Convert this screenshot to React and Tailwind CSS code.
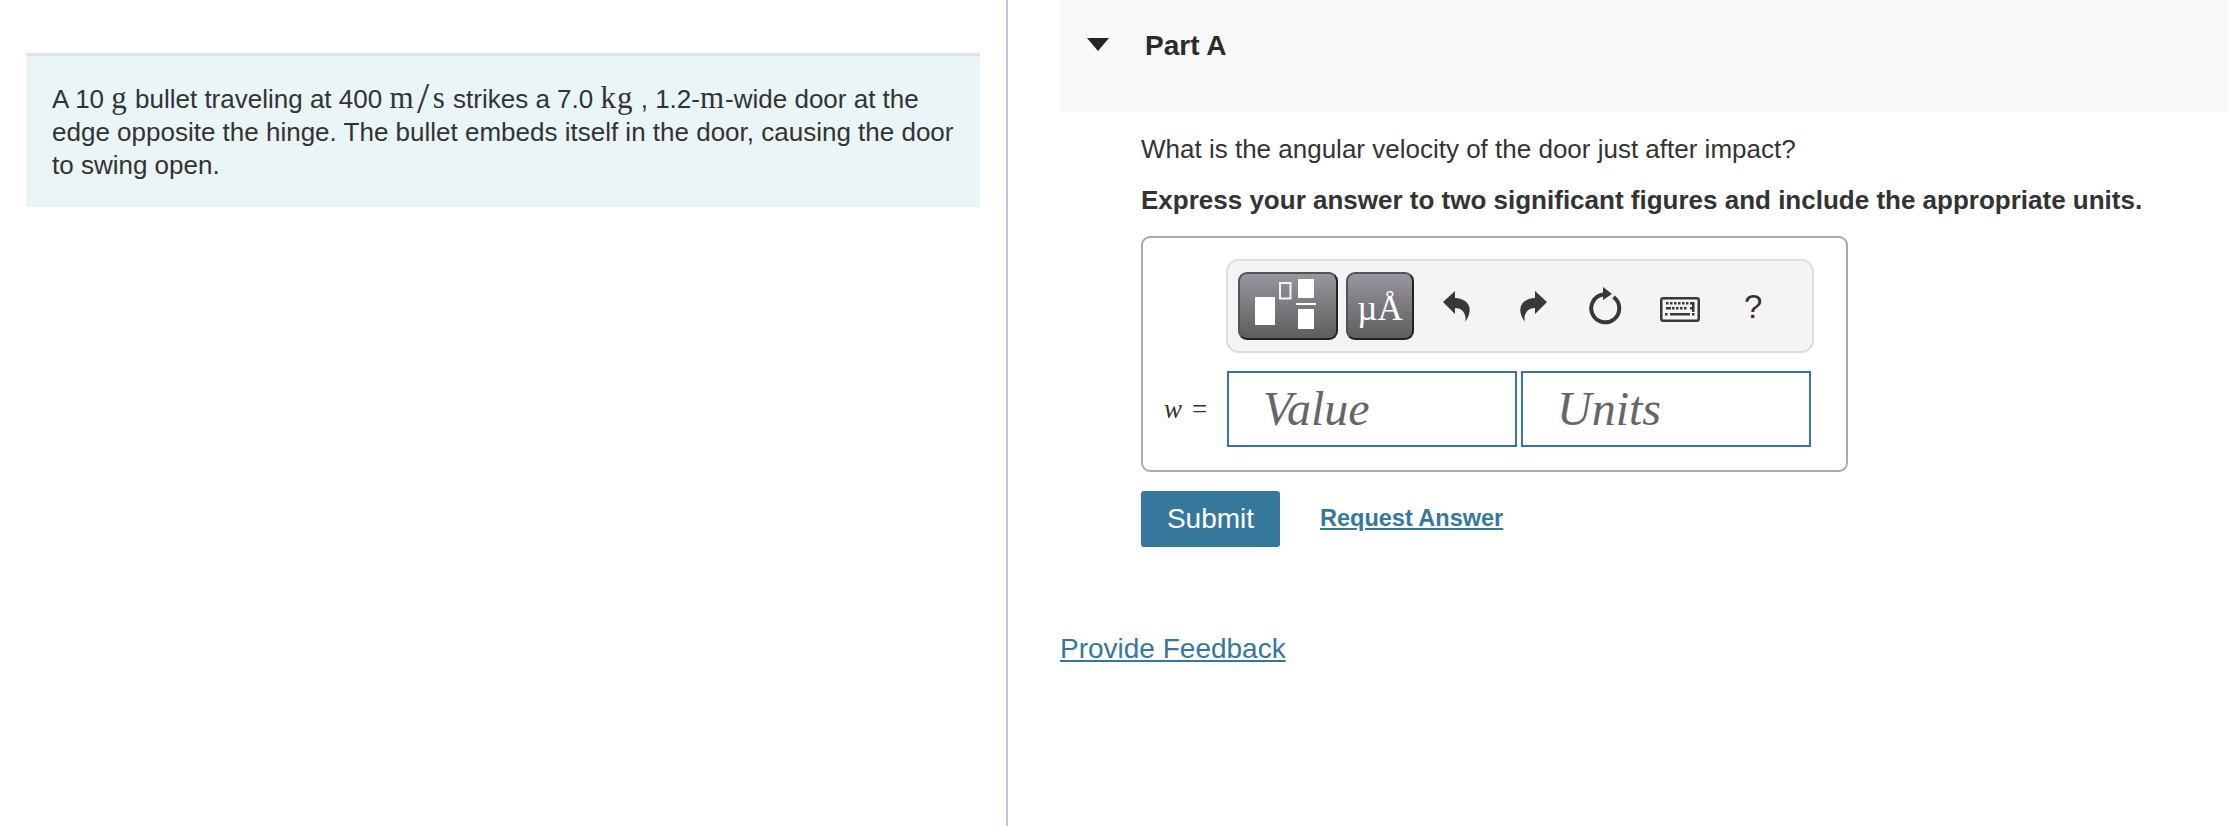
import React from 'react';

const sans = 'font-["Liberation_Sans",Arial,sans-serif]';

const M = ({ children }) => (
  <span className='font-["Liberation_Serif",serif] text-[31px] leading-none tracking-[1px]'>{children}</span>
);

const UndoIcon = ({ flip = false }) => (
  <svg width="27" height="31" viewBox="0 0 27 31" className={flip ? '-scale-x-100' : ''}>
    <path d="M0 11 L12 0 V7 C21 7 28 13 26.5 21 C26 25 24 28 22 31 C24 24 20 17 12 17 V23 Z" fill="#383838" />
  </svg>
);

const ResetIcon = () => (
  <svg width="34" height="38" viewBox="0 0 34 38">
    <path d="M25.5 10 A14 14 0 1 1 15 7.5" fill="none" stroke="#383838" strokeWidth="4" />
    <path d="M15 0 L24 7 L15 13 Z" fill="#383838" />
  </svg>
);

const KeyboardIcon = () => (
  <svg width="40" height="25" viewBox="0 0 40 25" fill="#383838">
    <rect x="1.25" y="1.25" width="37.5" height="22.5" rx="2" fill="#f4f4f4" stroke="#383838" strokeWidth="2.5" />
    {[6, 10, 14, 18, 22, 26, 30].map(x => <rect key={x} x={x} y="5" width="2.5" height="2.5" />)}
    {[12, 16, 20, 24].map(x => <rect key={x} x={x} y="10" width="2.5" height="2.5" />)}
    <rect x="30" y="10" width="3" height="2.5" />
    <rect x="32" y="5" width="2.5" height="10" />
    <rect x="6" y="10" width="5" height="2.5" />
    <rect x="5" y="16" width="2.5" height="2.5" />
    <rect x="10" y="16" width="20" height="2.5" />
    <rect x="32" y="16" width="2.5" height="2.5" />
  </svg>
);

const TemplatesIcon = () => (
  <svg width="66" height="54" viewBox="0 0 66 54">
    <rect x="0" y="18" width="20" height="28" fill="#fff" />
    <rect x="25" y="4" width="10.5" height="15.5" fill="none" stroke="#f4f4f4" strokeWidth="2" />
    <rect x="43" y="0" width="16" height="19" fill="#fff" />
    <rect x="41" y="24" width="20" height="2" fill="#fff" />
    <rect x="43" y="30" width="16" height="20" fill="#fff" />
  </svg>
);

const ToolButton = ({ className, children }) => (
  <div className={`h-[68px] rounded-[9px] border-2 border-[#555] border-b-[#222] border-r-[#222] bg-gradient-to-b from-[#98969f] to-[#5e5e5e] flex items-center justify-center ${className}`}>
    {children}
  </div>
);

const Field = ({ label }) => (
  <div className='w-[290px] h-[76px] border-2 border-[#36789b] flex items-center pl-[34px] font-["Liberation_Serif",serif] italic text-[48px] text-[#666]'>
    {label}
  </div>
);

export default function App() {
  return (
    <div className={`${sans} flex h-screen bg-white text-[#333] overflow-hidden`}>
      <div className="w-[1008px] shrink-0 border-r-2 border-[#b9c9e0] pl-[26px] pr-[26px] pt-[53px]">
        <div className="bg-[#e9f5f7] border-t-[3px] border-[#dee3e5] px-[26px] pt-[26px] pb-[25px] text-[26px] leading-[33px]">
          A 10 <M>g</M> bullet traveling at 400 <M>m<span className="text-[44px] leading-[0] font-light mx-[2.5px] align-[-5px]">/</span>s</M> strikes a 7.0 <M>kg</M> , 1.2-<M>m</M>-wide door at the edge opposite the hinge. The bullet embeds itself in the door, causing the door to swing open.
        </div>
      </div>

      <div className="flex-1 pl-[52px]">
        <div className="h-[112px] bg-[#f9f9f9] flex items-start pt-[28px] text-[28px] font-bold leading-[36px] text-[#2b2b2b]">
          <svg width="22" height="14" viewBox="0 0 22 14" className="ml-[27px] mt-[10px]">
            <path d="M0 0 H22 L11 13 Z" fill="#262626" />
          </svg>
          <span className="ml-[36px]">Part A</span>
        </div>

        <div className="pl-[81px]">
          <p className="mt-[20px] text-[26px] leading-[34px]">What is the angular velocity of the door just after impact?</p>
          <p className="mt-[17px] text-[26px] leading-[34px] font-bold">Express your answer to two significant figures and include the appropriate units.</p>

          <div className="mt-[19px] w-[707px] h-[236px] border-2 border-[#aaa] rounded-[9px] flex flex-col pl-[83px] pt-[21px]">
            <div className="w-[588px] h-[94px] border-2 border-[#ddd] rounded-[13px] bg-[#f4f4f4] flex items-center pl-[10px]">
              <ToolButton className="w-[100px]"><TemplatesIcon /></ToolButton>
              <ToolButton className='w-[68px] ml-[8px] font-["Liberation_Serif",serif] text-white text-[35px] leading-none pt-[4px]'>µÅ</ToolButton>
              <div className="ml-[29px]"><UndoIcon /></div>
              <div className="ml-[50px]"><UndoIcon flip /></div>
              <div className="ml-[41px]"><ResetIcon /></div>
              <div className="ml-[38px] mt-[6px]"><KeyboardIcon /></div>
              <span className="ml-[44px] text-[33px] leading-none text-[#333]">?</span>
            </div>
            <div className="flex items-center mt-[18px] -ml-[62px]">
              <span className='w-[63px] font-["Liberation_Serif",serif] text-[27px] whitespace-nowrap'><i>w</i><span className="ml-[10px]">=</span></span>
              <Field label="Value" />
              <div className="w-[4px]" />
              <Field label="Units" />
            </div>
          </div>

          <div className="flex items-center mt-[19px]">
            <button className="w-[139px] h-[56px] bg-[#36789b] text-white text-[28px] rounded-[3px]">Submit</button>
            <a className="ml-[40px] text-[23.5px] font-bold text-[#36789b] underline">Request Answer</a>
          </div>
        </div>

        <a className="block mt-[84px] text-[28px] leading-[36px] text-[#36789b] underline">Provide Feedback</a>
      </div>
    </div>
  );
}
